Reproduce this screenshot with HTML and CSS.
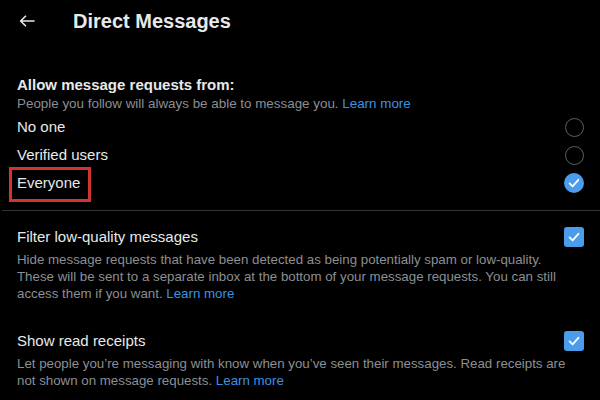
FILE: index.html
```html
<!DOCTYPE html>
<html>
<head>
<meta charset="utf-8">
<link rel="stylesheet" href="styles.css">
</head>
<body>
<div class="page">
  <header class="header">
    <svg class="back" viewBox="0 0 16 12" width="16" height="12"><path d="M15 6H2M6.5 1.2L1.6 6l4.9 4.8" fill="none" stroke="#e7e9ea" stroke-width="1.6" stroke-linecap="round" stroke-linejoin="round"/></svg>
    <h1 class="title">Direct Messages</h1>
  </header>

  <section class="group">
    <h2 class="group-title">Allow message requests from:</h2>
    <p class="hint">People you follow will always be able to message you. <a class="link">Learn more</a></p>
    <div class="option"><span class="label">No one</span><span class="radio"></span></div>
    <div class="option"><span class="label">Verified users</span><span class="radio"></span></div>
    <div class="option"><span class="label boxed">Everyone</span><span class="radio on"><svg viewBox="0 0 20 20" width="20" height="20"><path d="M5.6 10.4l3 3 5.8-6.6" fill="none" stroke="#fff" stroke-width="1.8" stroke-linecap="round" stroke-linejoin="round"/></svg></span></div>
  </section>

  <div class="divider"></div>

  <section class="setting">
    <div class="setting-head"><span class="setting-title">Filter low-quality messages</span><span class="check"><svg viewBox="0 0 20 20" width="20" height="20"><path d="M5.6 10.4l3 3 5.8-6.6" fill="none" stroke="#fff" stroke-width="1.8" stroke-linecap="round" stroke-linejoin="round"/></svg></span></div>
    <p class="desc">Hide message requests that have been detected as being potentially spam or low-quality. These will be sent to a separate inbox at the bottom of your message requests. You can still access them if you want. <a class="link">Learn more</a></p>
  </section>

  <section class="setting">
    <div class="setting-head"><span class="setting-title">Show read receipts</span><span class="check"><svg viewBox="0 0 20 20" width="20" height="20"><path d="M5.6 10.4l3 3 5.8-6.6" fill="none" stroke="#fff" stroke-width="1.8" stroke-linecap="round" stroke-linejoin="round"/></svg></span></div>
    <p class="desc">Let people you’re messaging with know when you’ve seen their messages. Read receipts are not shown on message requests. <a class="link">Learn more</a></p>
  </section>
</div>
</body>
</html>
```

FILE: styles.css
```css
html, body {
  margin: 0;
  padding: 0;
  background: #000;
}
body {
  width: 600px;
  height: 400px;
  overflow: hidden;
  font-family: "Liberation Sans", Arial, sans-serif;
  color: #e7e9ea;
}
.page {
  display: flex;
  flex-direction: column;
}
.header {
  display: flex;
  align-items: center;
  height: 42px;
  padding-left: 19px;
}
.back {
  display: block;
}
.title {
  margin: 0 0 0 38px;
  font-size: 20px;
  font-weight: 700;
  line-height: 24px;
}
.group {
  padding: 33px 16px 0 17px;
}
.group-title {
  margin: 0;
  font-size: 15px;
  font-weight: 700;
  line-height: 20px;
}
.hint {
  margin: 0;
  font-size: 13.4px;
  line-height: 18px;
  color: #8b8f94;
}
.link {
  color: #3a93e0;
}
.option {
  display: flex;
  align-items: center;
  justify-content: space-between;
  height: 28px;
}
.label {
  font-size: 15px;
  line-height: 20px;
}
.boxed {
  position: relative;
}
.boxed::after {
  content: "";
  position: absolute;
  left: -8px;
  right: -11px;
  top: -6px;
  bottom: -9px;
  border: 3px solid #d03530;
}
.radio {
  width: 17px;
  height: 17px;
  border: 1.5px solid #5b6064;
  border-radius: 50%;
}
.radio.on {
  border: 0;
  width: 20px;
  height: 20px;
  background: #4b9deb;
  display: flex;
}
.divider {
  height: 1px;
  background: #2f3336;
  margin: 13px 0 0 2px;
}
.setting {
  padding: 0 16px 0 17px;
}
.setting + .setting {
  margin-top: 28px;
}
.divider + .setting {
  margin-top: 15px;
}
.setting-head {
  display: flex;
  align-items: center;
  justify-content: space-between;
  height: 22px;
}
.setting-title {
  font-size: 15px;
  line-height: 20px;
}
.check {
  width: 20px;
  height: 20px;
  border-radius: 3px;
  background: #4b9deb;
  display: flex;
}
.desc {
  margin: 3px 0 0 0;
  font-size: 13.3px;
  line-height: 17px;
  color: #8b8f94;
  max-width: 560px;
}
```
